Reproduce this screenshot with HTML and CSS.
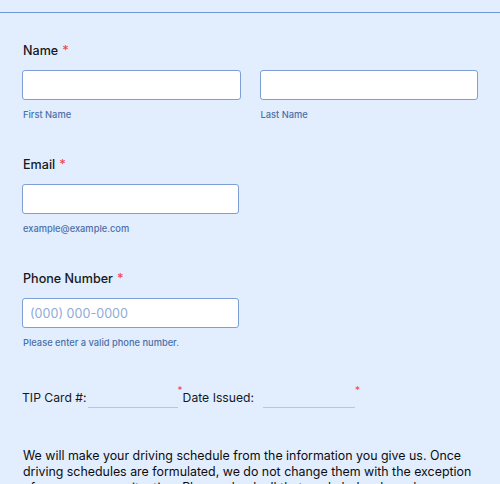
FILE: index.html
```html
<!DOCTYPE html>
<html>
<head>
<meta charset="utf-8">
<link rel="stylesheet" href="styles.css">
</head>
<body>
<div class="topline"></div>
<form class="form">
  <div class="field">
    <label class="label">Name<span class="req">*</span></label>
    <div class="name-grid">
      <div>
        <div class="input"></div>
        <div class="sub">First Name</div>
      </div>
      <div>
        <div class="input"></div>
        <div class="sub">Last Name</div>
      </div>
    </div>
  </div>
  <div class="field">
    <label class="label">Email<span class="req">*</span></label>
    <div class="input input-half"></div>
    <div class="sub">example@example.com</div>
  </div>
  <div class="field">
    <label class="label">Phone Number<span class="req">*</span></label>
    <div class="input input-half"><span class="placeholder">(000) 000-0000</span></div>
    <div class="sub">Please enter a valid phone number.</div>
  </div>
  <div class="tip-row">
    <span class="tip-label">TIP Card #:</span>
    <span class="line-input line-a"></span>
    <span class="mini-req">*</span>
    <span class="tip-label">Date Issued:</span>
    <span class="line-input line-b"></span>
    <span class="mini-req">*</span>
  </div>
  <p class="para">We will make your driving schedule from the information you give us. Once driving schedules are formulated, we do not change them with the exception of an emergency situation. Please check all that apply below based on your availability.</p>
</form>
</body>
</html>
```
FILE: styles.css
```css
html, body {
  margin: 0;
  padding: 0;
  background: #e2eefe;
  font-family: Inter, "Noto Sans", sans-serif;
  overflow: hidden;
  height: 484px;
}
.topline {
  height: 12px;
  border-bottom: 1px solid #6b98d8;
}
.form {
  padding: 30px 22px 0 22px;
}
.field {
  margin-bottom: 36px;
}
.label {
  display: block;
  font-size: 12.6px;
  line-height: 16px;
  font-weight: 500;
  color: #17181c;
  margin-bottom: 11px;
  padding-left: 1px;
}
.req {
  color: #f0464a;
  margin-left: 4px;
}
.name-grid {
  display: grid;
  grid-template-columns: 1fr 1fr;
  column-gap: 19px;
}
.input {
  box-sizing: border-box;
  height: 30px;
  background: #fff;
  border: 1px solid #7d9fd6;
  border-radius: 3px;
  display: flex;
  align-items: center;
  padding-left: 7px;
}
.input-half {
  width: 217px;
}
.placeholder {
  font-size: 12.6px;
  color: #8eabd7;
}
.sub {
  margin-top: 9px;
  font-size: 9.3px;
  line-height: 12px;
  font-weight: 500;
  color: #4c6ea8;
  padding-left: 1px;
}
.tip-row {
  display: flex;
  align-items: center;
  margin-top: 41px;
  height: 16px;
}
.tip-label {
  font-size: 12.2px;
  line-height: 16px;
  color: #17181c;
}
.line-input {
  box-sizing: border-box;
  height: 18px;
  margin-top: 2px;
  border-bottom: 1px solid #b9c7dd;
}
.line-a {
  width: 90px;
  margin-left: 1px;
}
.line-b {
  width: 92px;
  margin-left: 9px;
}
.mini-req {
  align-self: flex-start;
  margin-top: -5px;
  font-size: 10px;
  line-height: 10px;
  color: #f0464a;
  width: 5px;
}
.para {
  margin: 42px 0 0 0;
  padding-left: 1px;
  font-size: 12.4px;
  line-height: 16px;
  color: #0c0c0e;
}
```
